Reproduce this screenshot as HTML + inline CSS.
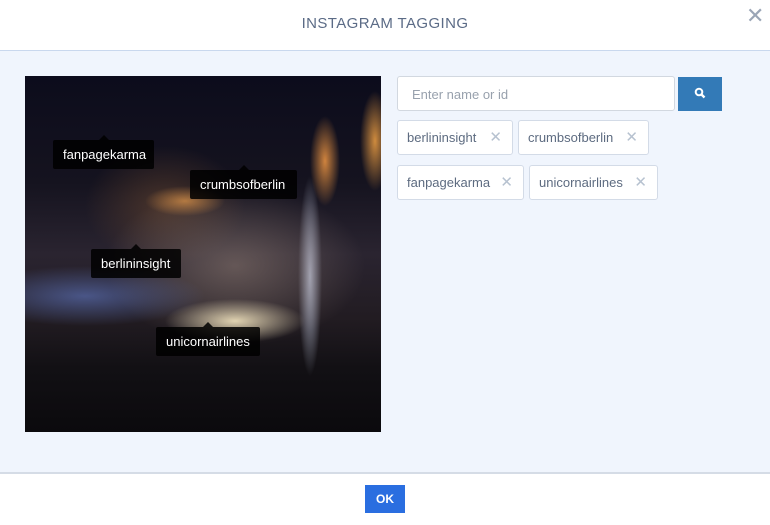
<!DOCTYPE html><html><head><style>
body{margin:0;width:770px;height:525px;font-family:"Liberation Sans",sans-serif;background:#fff;position:relative;overflow:hidden}
.hdr{position:absolute;left:0;top:0;width:770px;height:50px;background:#fff;border-bottom:1px solid #c9d8ee}
.hdr .t{position:absolute;left:0;right:0;top:15px;text-align:center;color:#5b6b86;font-size:15px;letter-spacing:.4px}
.x{position:absolute;left:746px;top:3px;color:#9aa5b6;font-size:22px}
.body{position:absolute;left:0;top:51px;width:770px;height:421px;background:#f0f5fd;border-bottom:2px solid #d5dce6}
.img{position:absolute;left:25px;top:76px;width:356px;height:356px;overflow:hidden;
background:
radial-gradient(ellipse 70px 22px at 210px 245px,rgba(255,240,200,.85),transparent),
radial-gradient(ellipse 15px 45px at 300px 85px,rgba(255,160,70,.8),transparent),
radial-gradient(ellipse 15px 50px at 350px 65px,rgba(255,170,70,.8),transparent),
radial-gradient(ellipse 40px 15px at 160px 125px,rgba(255,170,80,.6),transparent),
radial-gradient(ellipse 120px 30px at 60px 220px,rgba(110,140,230,.5),transparent),
radial-gradient(ellipse 130px 80px at 210px 190px,rgba(150,130,120,.55),transparent),
radial-gradient(ellipse 12px 100px at 285px 200px,rgba(220,230,255,.7),transparent),
radial-gradient(ellipse 80px 60px at 140px 130px,rgba(120,80,50,.5),transparent),
linear-gradient(#0c0c1c 0%,#15131f 30%,#2a2430 50%,#221c22 68%,#121014 82%,#0b0a0d 100%)}
.tag{position:absolute;background:rgba(0,0,0,.85);color:#fff;font-size:13px;height:29px;line-height:29px;padding:0 10px;border-radius:2px}
.tag:before{content:"";position:absolute;left:50%;top:-5px;margin-left:-5px;border:5px solid transparent;border-top:0;border-bottom-color:rgba(0,0,0,.85)}
.inp{position:absolute;left:397px;top:76px;width:278px;height:35px;background:#fff;border:1px solid #d2d8e0;border-radius:3px;color:#98a1ad;font-size:13px;line-height:35px;padding-left:14px;box-sizing:border-box}
.sb{position:absolute;left:678px;top:77px;width:44px;height:34px;background:#337ab7}
.chip{position:absolute;height:35px;background:#fff;border:1px solid #d3dbe7;border-radius:3px;box-sizing:border-box;color:#5d6b80;font-size:13px;line-height:33px;padding-left:9px}
.chip span{position:absolute;right:10px;color:#b7c2d0;font-size:15px}
.ok{position:absolute;left:365px;top:485px;width:40px;height:28px;background:#2a6ee0;color:#fff;font-size:12px;font-weight:bold;text-align:center;line-height:28px}
</style></head><body>
<div class="hdr"><div class="t">INSTAGRAM TAGGING</div></div>
<div class="x">✕</div>
<div class="body"></div>
<div class="img">
<div class="tag" style="left:28px;top:64px;width:81px">fanpagekarma</div>
<div class="tag" style="left:165px;top:94px;width:87px">crumbsofberlin</div>
<div class="tag" style="left:66px;top:173px;width:70px">berlininsight</div>
<div class="tag" style="left:131px;top:251px;width:84px">unicornairlines</div>
</div>
<div class="inp">Enter name or id</div>
<div class="sb"><svg width="44" height="34"><circle cx="21" cy="15" r="3.3" fill="none" stroke="#fff" stroke-width="2"/><path d="M23.5 17.5l3 3" stroke="#fff" stroke-width="2.4"/></svg></div>
<div class="chip" style="left:397px;top:120px;width:116px">berlininsight<span>✕</span></div>
<div class="chip" style="left:518px;top:120px;width:131px">crumbsofberlin<span>✕</span></div>
<div class="chip" style="left:397px;top:165px;width:127px">fanpagekarma<span>✕</span></div>
<div class="chip" style="left:529px;top:165px;width:129px">unicornairlines<span>✕</span></div>
<div class="ok">OK</div>
</body></html>
